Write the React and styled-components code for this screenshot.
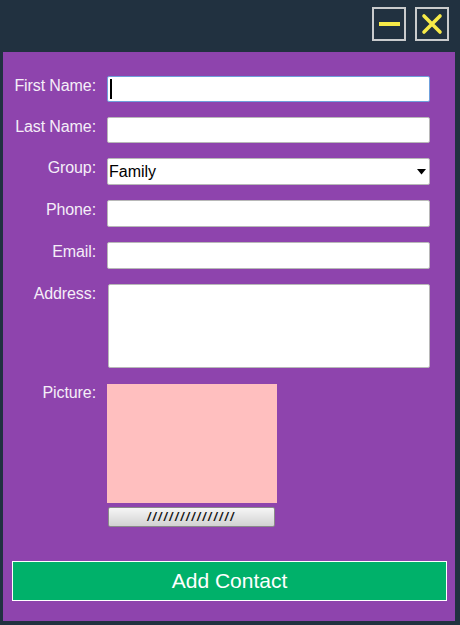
import React from "react";
import styled, { createGlobalStyle } from "styled-components";

const GlobalStyle = createGlobalStyle`
  html, body {
    margin: 0;
    padding: 0;
    background: #213140;
  }
  * {
    box-sizing: border-box;
  }
`;

function App() {
  return (
    <>
      <GlobalStyle />
      <Window>
        <TitleBar>
          <WinButton aria-label="minimize">
            <MinBar />
          </WinButton>
          <WinButton aria-label="close">
            <svg width="22" height="22" viewBox="0 0 22 22">
              <path d="M3 3 L19 19 M19 3 L3 19" stroke="#f7ea48" strokeWidth="3.6" strokeLinecap="round" />
            </svg>
          </WinButton>
        </TitleBar>
        <Panel>
          <Form>
            <Row>
              <Label>First Name:</Label>
              <FieldWrap>
                <TextInput focused />
                <Caret />
              </FieldWrap>
            </Row>
            <Row>
              <Label>Last Name:</Label>
              <TextInput />
            </Row>
            <Row>
              <Label>Group:</Label>
              <FieldWrap>
                <Select defaultValue="Family">
                  <option>Family</option>
                  <option>Friends</option>
                  <option>Work</option>
                </Select>
                <Arrow width="9" height="6" viewBox="0 0 9 6">
                  <path d="M0 0 H9 L4.5 5.5 Z" fill="#000" />
                </Arrow>
              </FieldWrap>
            </Row>
            <Row>
              <Label>Phone:</Label>
              <TextInput tall />
            </Row>
            <Row>
              <Label>Email:</Label>
              <TextInput tall />
            </Row>
            <Row>
              <Label>Address:</Label>
              <TextArea />
            </Row>
            <Row>
              <Label>Picture:</Label>
              <PictureCol>
                <Picture />
                <BrowseBar>////////////////</BrowseBar>
              </PictureCol>
            </Row>
          </Form>
          <AddButton>Add Contact</AddButton>
        </Panel>
      </Window>
    </>
  );
}

const Window = styled.div`
  width: 460px;
  height: 625px;
  background: #213140;
  display: flex;
  flex-direction: column;
  font-family: "Liberation Sans", Arial, sans-serif;
`;

const TitleBar = styled.div`
  height: 52px;
  display: flex;
  justify-content: flex-end;
  align-items: flex-start;
  gap: 9px;
  padding: 7px 11px 0 0;
`;

const WinButton = styled.button`
  width: 34px;
  height: 34px;
  border: 2px solid #c9cbcd;
  background: transparent;
  padding: 0;
  display: flex;
  align-items: center;
  justify-content: center;
  cursor: pointer;
`;

const MinBar = styled.span`
  display: block;
  width: 21px;
  height: 4px;
  background: #f7ea48;
`;

const Panel = styled.div`
  margin: 0 5px 4px 3px;
  height: 569px;
  background: #8e44ad;
  display: flex;
  flex-direction: column;
  padding: 24px 8px 20px 9px;
`;

const Form = styled.div`
  display: flex;
  flex-direction: column;
  gap: 15px;
  flex: 1;
`;

const Row = styled.div`
  display: flex;
  align-items: flex-start;
  gap: 11px;
  padding-right: 17px;
`;

const Label = styled.label`
  width: 84px;
  padding-top: 1px;
  text-align: right;
  color: #f5eef8;
  font-size: 16px;
  letter-spacing: -0.1px;
  flex-shrink: 0;
  white-space: nowrap;
`;

const FieldWrap = styled.div`
  position: relative;
  flex: 1;
  display: flex;
`;

const TextInput = styled.input`
  flex: 1;
  height: ${(p) => (p.tall ? "27px" : "26px")};
  border: 1px solid ${(p) => (p.focused ? "#6fa0dc" : "#b8b8b8")};
  border-radius: 2px;
  background: #fff;
  font-family: "Liberation Sans", Arial, sans-serif;
  font-size: 15px;
  padding: 0 3px;
  outline: none;
`;

const Caret = styled.span`
  position: absolute;
  left: 3px;
  top: 3px;
  width: 2px;
  height: 20px;
  background: #000;
`;

const Select = styled.select`
  flex: 1;
  height: 27px;
  border: 1px solid #b8b8b8;
  border-radius: 2px;
  background: #fff;
  appearance: none;
  font-family: "Liberation Sans", Arial, sans-serif;
  font-size: 16px;
  color: #000;
  padding: 0 0 0 1px;
  outline: none;
`;

const Arrow = styled.svg`
  position: absolute;
  right: 4px;
  top: 11px;
  pointer-events: none;
`;

const TextArea = styled.textarea`
  flex: 1;
  height: 84px;
  margin-left: 1px;
  border: 1px solid #b8b8b8;
  border-radius: 2px;
  background: #fff;
  resize: none;
  outline: none;
  font-family: "Liberation Sans", Arial, sans-serif;
`;

const PictureCol = styled.div`
  display: flex;
  flex-direction: column;
  gap: 4px;
  margin-top: 1px;
`;

const Picture = styled.div`
  width: 170px;
  height: 119px;
  background: #ffbfbf;
`;

const BrowseBar = styled.div`
  width: 167px;
  height: 20px;
  margin-left: 1px;
  border: 1px solid #8a8a8a;
  border-radius: 2px;
  background: linear-gradient(#f6f6f6, #d2d2d2);
  display: flex;
  align-items: center;
  justify-content: center;
  font-size: 12px;
  font-weight: bold;
  font-style: italic;
  letter-spacing: 2.2px;
  color: #111;
`;

const AddButton = styled.button`
  height: 40px;
  background: #00b16a;
  border: 1px solid #fff;
  color: #fff;
  font-family: "Liberation Sans", Arial, sans-serif;
  font-size: 21px;
  cursor: pointer;
`;

export default App;
